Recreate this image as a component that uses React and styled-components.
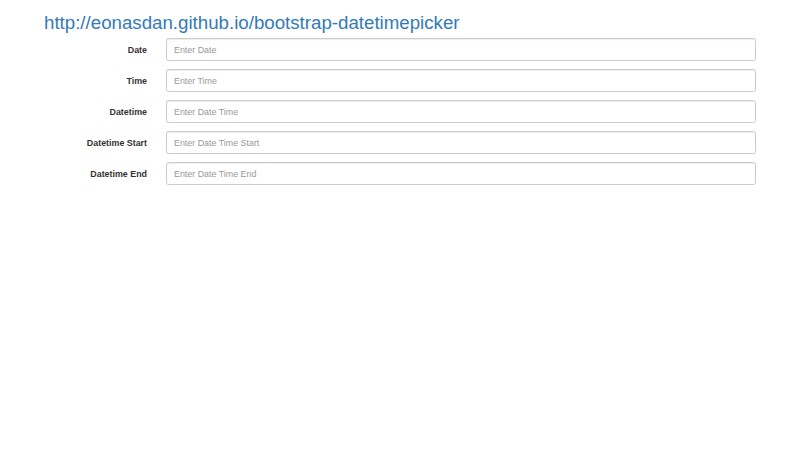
import { Fragment } from 'react';
import styled, { createGlobalStyle } from 'styled-components';

const GlobalStyle = createGlobalStyle`
  html, body {
    margin: 0;
    padding: 0;
    background: #fff;
    font-family: "Liberation Sans", Arial, Helvetica, sans-serif;
    color: #333;
  }
`;

const Page = styled.div`
  padding: 0 44px;
`;

const Title = styled.h2`
  margin: 0;
  padding-top: 12px;
  font-size: 18.7px;
  line-height: 21px;
  font-weight: 400;
  height: 26px;
  a {
    color: #337ab7;
    text-decoration: none;
  }
`;

const Form = styled.form`
  display: grid;
  grid-template-columns: 103px 1fr;
  column-gap: 19px;
  row-gap: 8px;
  align-items: center;
`;

const Label = styled.label`
  text-align: right;
  font-size: 8.9px;
  font-weight: 700;
  color: #333;
`;

const Input = styled.input`
  box-sizing: border-box;
  width: 100%;
  height: 23px;
  padding: 0 7px;
  font-family: inherit;
  font-size: 8.9px;
  color: #555;
  background: #fff;
  border: 1px solid #ccc;
  border-radius: 2.5px;
  box-shadow: inset 0 1px 1px rgba(0, 0, 0, 0.075);
  outline: none;
  &::placeholder {
    color: #999;
  }
`;

const fields = [
  { id: 'date', label: 'Date', placeholder: 'Enter Date' },
  { id: 'time', label: 'Time', placeholder: 'Enter Time' },
  { id: 'datetime', label: 'Datetime', placeholder: 'Enter Date Time' },
  { id: 'start', label: 'Datetime Start', placeholder: 'Enter Date Time Start' },
  { id: 'end', label: 'Datetime End', placeholder: 'Enter Date Time End' },
];

const App = () => {
  return (
    <Page>
      <GlobalStyle />
      <Title>
        <a href="#">http://eonasdan.github.io/bootstrap-datetimepicker</a>
      </Title>
      <Form onSubmit={(e) => e.preventDefault()}>
        {fields.map((f) => (
          <Fragment key={f.id}>
            <Label htmlFor={f.id}>{f.label}</Label>
            <Input id={f.id} type="text" placeholder={f.placeholder} />
          </Fragment>
        ))}
      </Form>
    </Page>
  );
};

export default App;
